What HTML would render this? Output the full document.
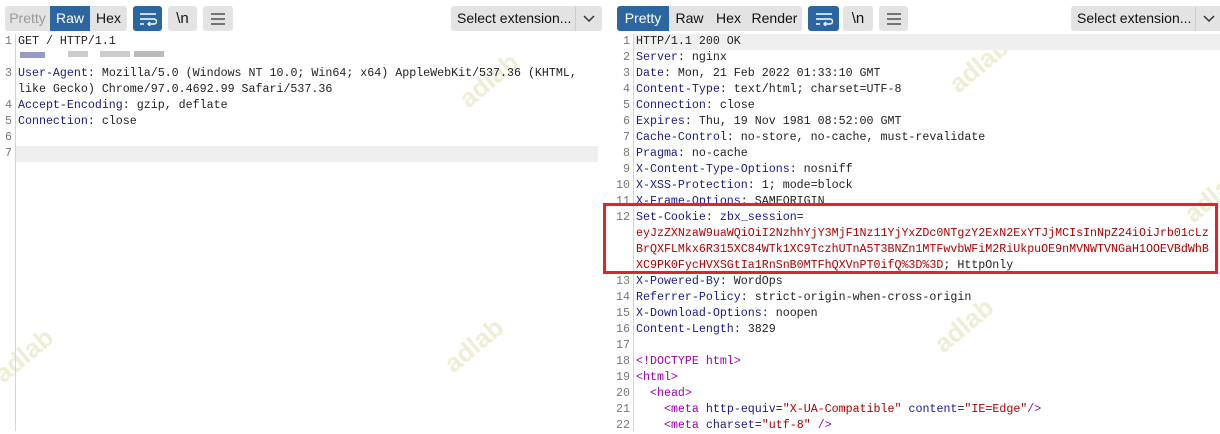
<!DOCTYPE html>
<html><head><meta charset="utf-8"><style>
*{margin:0;padding:0;box-sizing:border-box}
body{width:1220px;height:431px;overflow:hidden;background:#fff;font-family:"Liberation Sans",sans-serif;position:relative}
.tb{position:absolute;top:0;height:33px;background:#fff}
.btn{position:absolute;top:6px;height:25px;font-size:14px;line-height:25px;text-align:center;color:#111;background:#e3e3e3}
.blue{background:#2b66a0;color:#fff}
.ed{position:absolute;top:34px;bottom:0;background:#fff;font-family:"Liberation Mono",monospace;font-size:11.65px}
.ln{position:absolute;height:16px;line-height:16px;white-space:pre;color:#222}
.num{position:absolute;height:16px;line-height:16px;color:#777;text-align:right}
.k{color:#1a1a8a}.v{color:#222}.r{color:#b00000}.t{color:#a000b0}
.wm{position:absolute;font:bold 26px "Liberation Sans",sans-serif;color:#efedd6;transform:rotate(-40deg);z-index:0}
</style></head><body>
<div class="wm" style="left:945px;top:50px">adlab</div>
<div class="wm" style="left:440px;top:330px">adlab</div>
<div class="wm" style="left:930px;top:310px">adlab</div>
<div class="wm" style="left:-10px;top:340px">adlab</div>
<div class="wm" style="left:455px;top:65px">adlab</div>
<div class="wm" style="left:1180px;top:180px">adlab</div>
<!-- left toolbar -->
<div class="tb" style="left:0;width:605px">
<div class="btn" style="left:5px;width:45px;color:#999;border-radius:3px 0 0 3px">Pretty</div>
<div class="btn blue" style="left:50px;width:40px">Raw</div>
<div class="btn" style="left:90px;width:37px;border-radius:0 3px 3px 0">Hex</div>
<div class="btn blue" style="left:133px;width:29px;border-radius:3px"><svg width="18" height="14" viewBox="0 0 18 14" style="margin-top:6px"><path d="M1 2h16M1 7h14a2.5 2.5 0 0 1 0 5H9M11 10l-2 2 2 2M1 12h4" stroke="#fff" stroke-width="1.4" fill="none"/></svg></div>
<div class="btn" style="left:168px;width:29px;border-radius:3px;font-size:15px">\n</div>
<div class="btn" style="left:203px;width:30px;border-radius:3px"><svg width="16" height="14" viewBox="0 0 16 14" style="margin-top:6px"><path d="M1 2h14M1 7h14M1 12h14" stroke="#333" stroke-width="1.3"/></svg></div>
<div class="btn" style="left:451px;width:151px;border-radius:3px;text-align:left;padding-left:6px">Select extension...<span style="position:absolute;left:124px;top:0;width:1px;height:25px;background:#ccc"></span><svg width="12" height="8" viewBox="0 0 12 8" style="position:absolute;left:132px;top:9px"><path d="M1 1l5 5 5-5" stroke="#333" stroke-width="1.5" fill="none"/></svg></div>
</div>
<!-- right toolbar -->
<div class="tb" style="left:605px;width:615px">
<div class="btn blue" style="left:12px;width:52px;border-radius:3px 0 0 3px">Pretty</div>
<div class="btn" style="left:64px;width:41px">Raw</div>
<div class="btn" style="left:105px;width:37px">Hex</div>
<div class="btn" style="left:142px;width:55px;border-radius:0 3px 3px 0">Render</div>
<div class="btn blue" style="left:203px;width:31px;border-radius:3px"><svg width="18" height="14" viewBox="0 0 18 14" style="margin-top:6px"><path d="M1 2h16M1 7h14a2.5 2.5 0 0 1 0 5H9M11 10l-2 2 2 2M1 12h4" stroke="#fff" stroke-width="1.4" fill="none"/></svg></div>
<div class="btn" style="left:238px;width:30px;border-radius:3px;font-size:15px">\n</div>
<div class="btn" style="left:274px;width:29px;border-radius:3px"><svg width="16" height="14" viewBox="0 0 16 14" style="margin-top:6px"><path d="M1 2h14M1 7h14M1 12h14" stroke="#333" stroke-width="1.3"/></svg></div>
<div class="btn" style="left:466px;width:154px;border-radius:3px 0 0 3px;text-align:left;padding-left:6px">Select extension...<span style="position:absolute;left:124px;top:0;width:1px;height:25px;background:#ccc"></span><svg width="12" height="8" viewBox="0 0 12 8" style="position:absolute;left:132px;top:9px"><path d="M1 1l5 5 5-5" stroke="#333" stroke-width="1.5" fill="none"/></svg></div>
</div>

<!-- left editor -->
<div class="ed" style="left:0;width:598px;background:transparent">
<div style="position:absolute;left:15px;top:0;bottom:0;width:1px;background:#d4d4d4"></div>
<div style="position:absolute;left:16px;right:0;top:112px;height:16px;background:#efefef"></div>
<div class="num" style="left:2px;width:10px;top:0">1</div>
<div class="num" style="left:2px;width:10px;top:32px">3</div>
<div class="num" style="left:2px;width:10px;top:64px">4</div>
<div class="num" style="left:2px;width:10px;top:80px">5</div>
<div class="num" style="left:2px;width:10px;top:96px">6</div>
<div class="num" style="left:2px;width:10px;top:112px">7</div>
<div class="ln" style="left:18px;top:0">GET / HTTP/1.1</div>
<div style="position:absolute;left:20px;top:18px;width:25px;height:6px;background:#9a9ac8"></div>
<div style="position:absolute;left:68px;top:17px;width:20px;height:6px;background:#ccc"></div>
<div style="position:absolute;left:100px;top:17px;width:30px;height:6px;background:#ccc"></div>
<div style="position:absolute;left:134px;top:17px;width:30px;height:6px;background:#bbb"></div>
<div class="ln" style="left:18px;top:32px"><span class="k">User-Agent</span>: Mozilla/5.0 (Windows NT 10.0; Win64; x64) AppleWebKit/537.36 (KHTML,</div>
<div class="ln" style="left:18px;top:48px">like Gecko) Chrome/97.0.4692.99 Safari/537.36</div>
<div class="ln" style="left:18px;top:64px"><span class="k">Accept-Encoding</span>: gzip, deflate</div>
<div class="ln" style="left:18px;top:80px"><span class="k">Connection</span>: close</div>
</div>

<!-- right editor -->
<div class="ed" style="left:612px;width:608px;background:transparent">
<div style="position:absolute;left:21px;top:0;bottom:0;width:1px;background:#d4d4d4"></div>
<div style="position:absolute;left:22px;right:0;top:0;height:16px;background:#efefef"></div>
<div class="ln" style="left:24px;top:0">HTTP/1.1 200 OK</div>
<div class="ln" style="left:24px;top:16px"><span class="k">Server</span>: nginx</div>
<div class="ln" style="left:24px;top:32px"><span class="k">Date</span>: Mon, 21 Feb 2022 01:33:10 GMT</div>
<div class="ln" style="left:24px;top:48px"><span class="k">Content-Type</span>: text/html; charset=UTF-8</div>
<div class="ln" style="left:24px;top:64px"><span class="k">Connection</span>: close</div>
<div class="ln" style="left:24px;top:80px"><span class="k">Expires</span>: Thu, 19 Nov 1981 08:52:00 GMT</div>
<div class="ln" style="left:24px;top:96px"><span class="k">Cache-Control</span>: no-store, no-cache, must-revalidate</div>
<div class="ln" style="left:24px;top:112px"><span class="k">Pragma</span>: no-cache</div>
<div class="ln" style="left:24px;top:128px"><span class="k">X-Content-Type-Options</span>: nosniff</div>
<div class="ln" style="left:24px;top:144px"><span class="k">X-XSS-Protection</span>: 1; mode=block</div>
<div class="ln" style="left:24px;top:160px"><span class="k">X-Frame-Options</span>: SAMEORIGIN</div>
<div class="ln" style="left:24px;top:176px"><span class="k">Set-Cookie</span>: <span class="k">zbx_session</span>=</div>
<div class="ln r" style="left:24px;top:192px">eyJzZXNzaW9uaWQiOiI2NzhhYjY3MjF1Nz11YjYxZDc0NTgzY2ExN2ExYTJjMCIsInNpZ24iOiJrb01cLz</div>
<div class="ln r" style="left:24px;top:208px">BrQXFLMkx6R315XC84WTk1XC9TczhUTnA5T3BNZn1MTFwvbWFiM2RiUkpuOE9nMVNWTVNGaH1OOEVBdWhB</div>
<div class="ln" style="left:24px;top:224px"><span class="r">XC9PK0FycHVXSGtIa1RnSnB0MTFhQXVnPT0ifQ%3D%3D</span>; HttpOnly</div>
<div class="ln" style="left:24px;top:240px"><span class="k">X-Powered-By</span>: WordOps</div>
<div class="ln" style="left:24px;top:256px"><span class="k">Referrer-Policy</span>: strict-origin-when-cross-origin</div>
<div class="ln" style="left:24px;top:272px"><span class="k">X-Download-Options</span>: noopen</div>
<div class="ln" style="left:24px;top:288px"><span class="k">Content-Length</span>: 3829</div>
<div class="ln" style="left:24px;top:320px"><span class="t">&lt;!DOCTYPE html&gt;</span></div>
<div class="ln" style="left:24px;top:336px"><span class="t">&lt;html&gt;</span></div>
<div class="ln" style="left:24px;top:352px">  <span class="t">&lt;head&gt;</span></div>
<div class="ln" style="left:24px;top:368px">    <span class="t">&lt;meta</span> <span class="k">http-equiv</span>=<span class="r">"X-UA-Compatible"</span> <span class="k">content</span>=<span class="r">"IE=Edge"</span><span class="t">/&gt;</span></div>
<div class="ln" style="left:24px;top:384px">    <span class="t">&lt;meta</span> <span class="k">charset</span>=<span class="r">"utf-8"</span> <span class="t">/&gt;</span></div>
<div class="num" style="left:0;width:18px;top:0">1</div><div class="num" style="left:0;width:18px;top:16px">2</div><div class="num" style="left:0;width:18px;top:32px">3</div><div class="num" style="left:0;width:18px;top:48px">4</div><div class="num" style="left:0;width:18px;top:64px">5</div><div class="num" style="left:0;width:18px;top:80px">6</div><div class="num" style="left:0;width:18px;top:96px">7</div><div class="num" style="left:0;width:18px;top:112px">8</div><div class="num" style="left:0;width:18px;top:128px">9</div><div class="num" style="left:0;width:18px;top:144px">10</div><div class="num" style="left:0;width:18px;top:160px">11</div><div class="num" style="left:0;width:18px;top:176px">12</div><div class="num" style="left:0;width:18px;top:240px">13</div><div class="num" style="left:0;width:18px;top:256px">14</div><div class="num" style="left:0;width:18px;top:272px">15</div><div class="num" style="left:0;width:18px;top:288px">16</div><div class="num" style="left:0;width:18px;top:304px">17</div><div class="num" style="left:0;width:18px;top:320px">18</div><div class="num" style="left:0;width:18px;top:336px">19</div><div class="num" style="left:0;width:18px;top:352px">20</div><div class="num" style="left:0;width:18px;top:368px">21</div><div class="num" style="left:0;width:18px;top:384px">22</div>
</div>
<div style="position:absolute;left:603px;top:203px;width:615px;height:71px;border:3px solid #e8202a"></div>
</body></html>
